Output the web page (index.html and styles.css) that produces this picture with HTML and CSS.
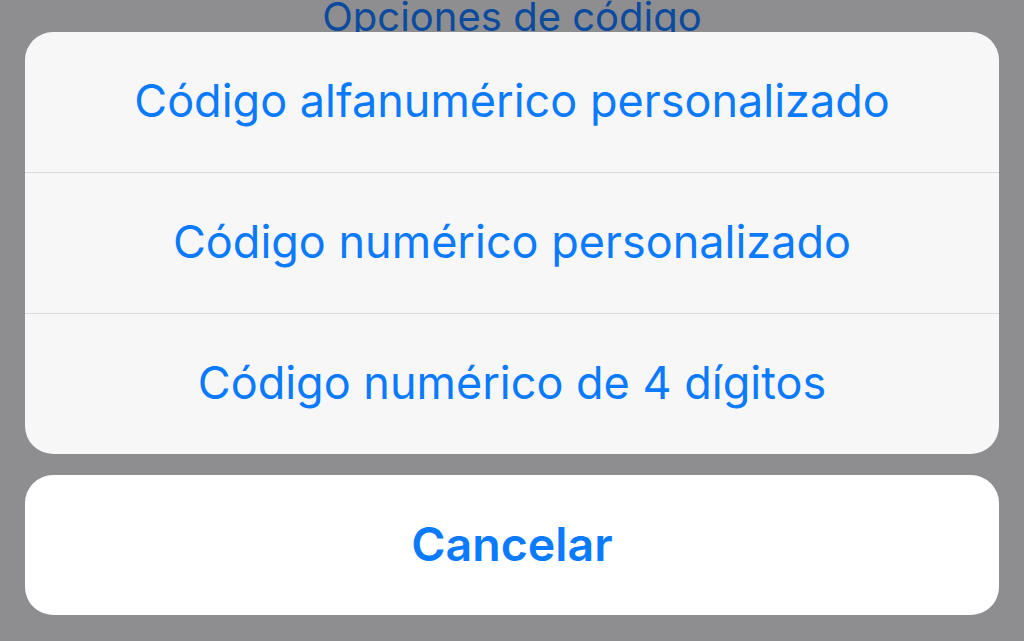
FILE: index.html
```html
<!DOCTYPE html>
<html lang="es">
<head>
    <meta charset="UTF-8">
    <meta name="viewport" content="width=device-width, initial-scale=1.0">
    <title>Opciones de código</title>
    <link rel="stylesheet" href="styles.css">
</head>
<body>
    <div class="screen">
        <div class="title-bar">
            <span class="title">Opciones de código</span>
        </div>

        <div class="sheet">
            <div class="option">Código alfanumérico personalizado</div>
            <div class="option">Código numérico personalizado</div>
            <div class="option">Código numérico de 4 dígitos</div>
        </div>

        <div class="cancel">Cancelar</div>
    </div>
</body>
</html>
```

FILE: styles.css
```css
* {
    margin: 0;
    padding: 0;
    box-sizing: border-box;
}

body {
    font-family: Inter, 'Noto Sans', sans-serif;
    background: #8e8e90;
    width: 1024px;
    height: 641px;
    overflow: hidden;
}

.screen {
    display: flex;
    flex-direction: column;
    padding: 0 25px;
}

/* header of the screen underneath, mostly hidden by the sheet */
.title-bar {
    height: 32px;
    overflow: hidden;
    display: flex;
    justify-content: center;
    align-items: flex-start;
}

.title {
    font-size: 40px;
    line-height: 40px;
    color: #0b4a9c;
    margin-top: -3px;
}

.sheet {
    background: #f7f7f8;
    border-radius: 28px;
    overflow: hidden;
}

.option {
    height: 141px;
    display: flex;
    align-items: center;
    justify-content: center;
    padding-bottom: 4px;
    font-size: 45px;
    color: #0a7aff;
    border-top: 1px solid #d9d9dd;
}

.option:first-child {
    height: 140px;
    border-top: none;
}

.cancel {
    margin-top: 21px;
    height: 140px;
    background: #ffffff;
    border-radius: 28px;
    display: flex;
    align-items: center;
    justify-content: center;
    padding-bottom: 2px;
    font-size: 46.5px;
    font-weight: 600;
    color: #0a7aff;
}
```
